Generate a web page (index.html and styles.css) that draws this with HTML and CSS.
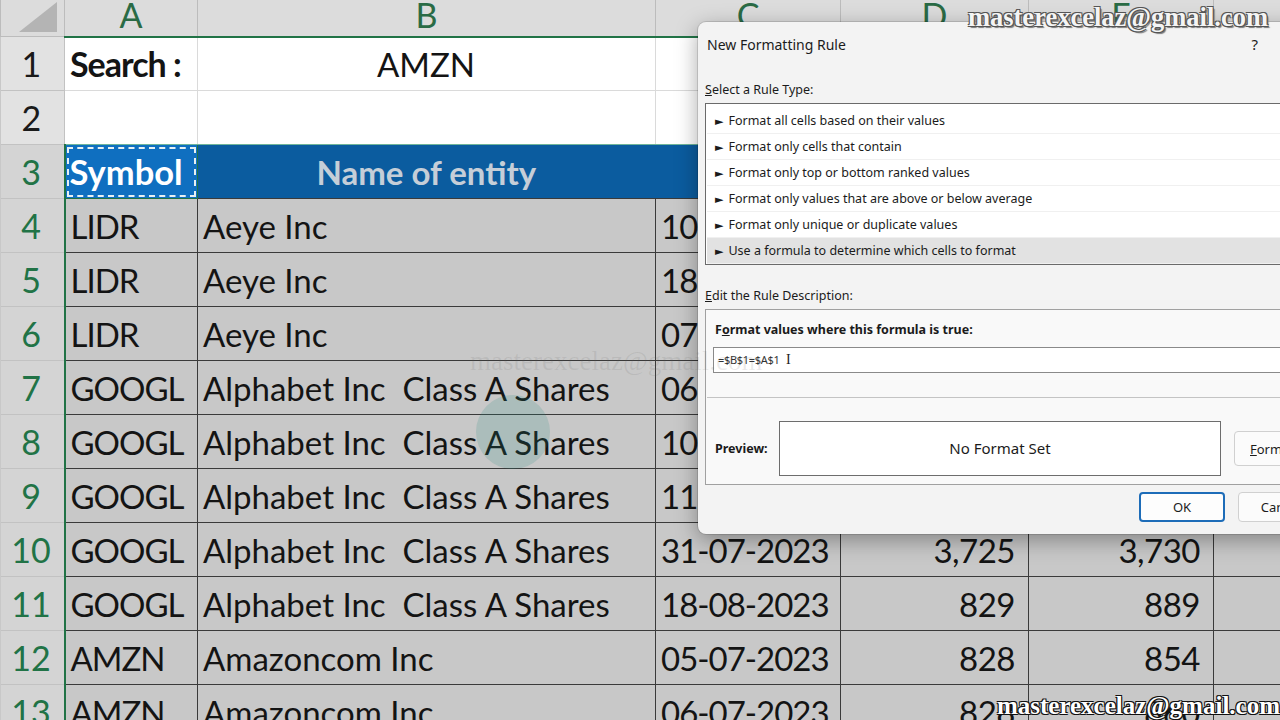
FILE: index.html
```html
<!DOCTYPE html>
<html lang="en">
<head>
    <meta charset="UTF-8">
    <title>New Formatting Rule</title>
    <link rel="stylesheet" href="styles.css">
</head>
<body>
    <div class="sheet">
        <table class="grid">
            <colgroup>
                <col class="col-hd">
                <col class="col-a">
                <col class="col-b">
                <col class="col-c">
                <col class="col-d">
                <col class="col-e">
                <col class="col-f">
            </colgroup>
            <thead>
                <tr>
                    <th class="corner">
                        <svg width="64" height="36" viewBox="0 0 64 36"><polygon points="56,2 56,32 18,32" fill="#b4b4b4"/></svg>
                    </th>
                    <th>A</th>
                    <th>B</th>
                    <th>C</th>
                    <th>D</th>
                    <th>E</th>
                    <th>F</th>
                </tr>
            </thead>
            <tbody>
                <tr class="plain">
                    <th>1</th>
                    <td class="search-label">Search :</td>
                    <td class="search-box">AMZN</td>
                    <td></td><td></td><td></td><td></td>
                </tr>
                <tr class="plain">
                    <th>2</th>
                    <td></td><td></td><td></td><td></td><td></td><td></td>
                </tr>
                <tr class="head-row">
                    <th>3</th>
                    <td class="active">Symbol</td>
                    <td class="center">Name of entity</td>
                    <td class="center">Date</td>
                    <td class="center">Open</td>
                    <td class="center">Close</td>
                    <td></td>
                </tr>
                <tr><th>4</th><td>LIDR</td><td>Aeye Inc</td><td>10-07-2023</td><td class="num">2</td><td class="num">2</td><td></td></tr>
                <tr><th>5</th><td>LIDR</td><td>Aeye Inc</td><td>18-07-2023</td><td class="num">1</td><td class="num">1</td><td></td></tr>
                <tr><th>6</th><td>LIDR</td><td>Aeye Inc</td><td>07-08-2023</td><td class="num">1</td><td class="num">1</td><td></td></tr>
                <tr><th>7</th><td>GOOGL</td><td>Alphabet Inc&nbsp; Class A Shares</td><td>06-07-2023</td><td class="num">3,610</td><td class="num">3,640</td><td></td></tr>
                <tr><th>8</th><td>GOOGL</td><td>Alphabet Inc&nbsp; Class A Shares</td><td>10-07-2023</td><td class="num">3,650</td><td class="num">3,660</td><td></td></tr>
                <tr><th>9</th><td>GOOGL</td><td>Alphabet Inc&nbsp; Class A Shares</td><td>11-07-2023</td><td class="num">3,700</td><td class="num">3,710</td><td></td></tr>
                <tr><th>10</th><td>GOOGL</td><td>Alphabet Inc&nbsp; Class A Shares</td><td>31-07-2023</td><td class="num">3,725</td><td class="num">3,730</td><td></td></tr>
                <tr><th>11</th><td>GOOGL</td><td>Alphabet Inc&nbsp; Class A Shares</td><td>18-08-2023</td><td class="num">829</td><td class="num">889</td><td></td></tr>
                <tr><th>12</th><td>AMZN</td><td>Amazoncom Inc</td><td>05-07-2023</td><td class="num">828</td><td class="num">854</td><td></td></tr>
                <tr><th>13</th><td>AMZN</td><td>Amazoncom Inc</td><td>06-07-2023</td><td class="num">828</td><td class="num">860</td><td></td></tr>
            </tbody>
        </table>

        <div class="cursor-ring"></div>

        <div class="dialog">
            <div class="dlg-title">
                <span>New Formatting Rule</span>
                <span class="help">?</span>
                <span class="close">&#x2715;</span>
            </div>

            <div class="dlg-label"><u>S</u>elect a Rule Type:</div>
            <ul class="rule-list">
                <li>Format all cells based on their values</li>
                <li>Format only cells that contain</li>
                <li>Format only top or bottom ranked values</li>
                <li>Format only values that are above or below average</li>
                <li>Format only unique or duplicate values</li>
                <li class="selected">Use a formula to determine which cells to format</li>
            </ul>

            <div class="dlg-label"><u>E</u>dit the Rule Description:</div>
            <div class="desc-box">
                <div class="desc-title">F<u>o</u>rmat values where this formula is true:</div>
                <div class="formula">=$B$1=$A$1<span class="ibeam">I</span></div>
                <div class="divider"></div>
                <div class="preview-row">
                    <span class="preview-label">Preview:</span>
                    <div class="preview-box">No Format Set</div>
                    <button class="btn btn-format"><u>F</u>ormat...</button>
                </div>
            </div>

            <div class="dlg-buttons">
                <button class="btn btn-ok">OK</button>
                <button class="btn">Cancel</button>
            </div>
        </div>

        <div class="watermark wm-top">masterexcelaz@gmail.com</div>
        <div class="watermark wm-mid">masterexcelaz@gmail.com</div>
        <div class="watermark wm-bottom">masterexcelaz@gmail.com</div>
    </div>
</body>
</html>
```

FILE: styles.css
```css
* {
    box-sizing: border-box;
}

body {
    margin: 0;
    background-color: #c8c8c8;
    font-family: Lato, "Liberation Sans", sans-serif;
    overflow: hidden;
}

.sheet {
    position: relative;
    width: 1280px;
    height: 720px;
    overflow: hidden;
}

/* spreadsheet grid */
.grid {
    border-collapse: collapse;
    table-layout: fixed;
    width: 1413px;
}

.col-hd { width: 64px; }
.col-a { width: 133px; }
.col-b { width: 458px; }
.col-c { width: 185px; }
.col-d { width: 188px; }
.col-e { width: 185px; }
.col-f { width: 200px; }

.grid th,
.grid td {
    height: 54px;
    padding: 0 6px 0 5px;
    font-size: 33px;
    font-weight: normal;
    white-space: nowrap;
    overflow: hidden;
    color: #141414;
}

.grid td {
    background-color: #c8c8c8;
    border: 1px solid #3a3a3a;
}

/* symbols and dates are set a little tighter, like the narrow sheet font */
.grid tbody td:nth-child(2) {
    letter-spacing: -1px;
}

.grid tbody td:nth-child(4) {
    letter-spacing: -1px;
}

.grid thead th {
    height: 36px;
    padding: 0;
    background-color: #dcdcdc;
    color: #2a6b45;
    font-size: 34px;
    text-align: center;
    vertical-align: top;
    line-height: 30px;
    border-left: 1px solid #bcbcbc;
    border-right: 1px solid #bcbcbc;
    border-bottom: 2px solid #217346;
}

.grid thead th.corner {
    border-bottom: 1px solid #bcbcbc;
    line-height: 0;
}

.grid tbody th {
    padding: 0 2px 0 0;
    text-align: center;
    background-color: #d4d4d4;
    color: #217346;
    font-size: 34px;
    border-top: 1px solid #c2c2c2;
    border-bottom: 1px solid #c2c2c2;
    border-right: 2px solid #217346;
}

.grid tr.plain th {
    background-color: #e2e2e2;
    color: #1a1a1a;
    border-right: 1px solid #c2c2c2;
}

.grid tr.plain td {
    background-color: #ffffff;
    border: 1px solid #dadada;
}

.grid tr.plain + tr.plain td {
    border-bottom: 1px solid #6fb59a;
}

.grid td.search-label {
    font-weight: bold;
    font-size: 34px;
    letter-spacing: 0;
    border-right: 1px solid #111;
    border-bottom: 1px solid #6a6a6a;
}

.grid td.search-box {
    text-align: center;
    border-right: 1px solid #111;
    border-bottom: 1px solid #6a6a6a;
}

.grid tr.head-row td {
    background-color: #0b5c9f;
    color: #c5ced8;
    font-weight: bold;
    letter-spacing: 0;
    border-top: 1px solid #8fd3c4;
    border-bottom: 1px solid #3a3a3a;
    border-left: none;
    border-right: none;
}

.grid tr.head-row td.active {
    background-color: #0f6fc0;
    color: #ffffff;
    font-size: 34.5px;
    padding-left: 4px;
    border: 1px solid #217346;
    outline: 2px dashed #e6f0f4;
    outline-offset: -4px;
}

.center {
    text-align: center;
}

.grid td.num {
    text-align: right;
    padding-right: 13px;
    letter-spacing: -0.5px;
}

.cursor-ring {
    position: absolute;
    left: 476px;
    top: 395px;
    width: 74px;
    height: 74px;
    border-radius: 50%;
    background-color: rgba(40, 140, 125, 0.18);
}

/* New Formatting Rule dialog */
.dialog {
    position: absolute;
    left: 698px;
    top: 22px;
    width: 640px;
    height: 512px;
    padding: 0 14px 0 7px;
    background-color: #f3f3f3;
    border-radius: 8px;
    box-shadow: 0 6px 22px rgba(0, 0, 0, 0.35), 0 0 0 1px rgba(0, 0, 0, 0.12);
    font-family: "Noto Sans", "Open Sans", sans-serif;
    font-size: 12.5px;
    color: #1b1b1b;
}

.dlg-title {
    display: flex;
    align-items: center;
    height: 44px;
    padding-left: 2px;
    font-size: 14px;
}

.dlg-title .help {
    margin-left: auto;
    margin-right: 38px;
    font-size: 15px;
}

.dlg-title .close {
    margin-right: 16px;
    font-size: 14px;
}

.dlg-label {
    height: 20px;
    margin-top: 14px;
    line-height: 20px;
}

.rule-list {
    list-style: none;
    margin: 3px 0 0;
    padding: 4px 0 0;
    height: 162px;
    border: 1px solid #6a6a6a;
    background-color: #ffffff;
}

.rule-list li {
    height: 26px;
    line-height: 25px;
    padding-left: 8px;
    margin-left: 1px;
    border-bottom: 1px solid #f0f0f0;
}

.rule-list li::before {
    content: "\25BA";
    font-family: "DejaVu Sans", sans-serif;
    font-size: 11px;
    margin-right: 5px;
    vertical-align: 0;
}

.rule-list li.selected {
    background-color: #e2e2e2;
}

.rule-list + .dlg-label {
    margin-top: 21px;
}

.desc-box {
    margin-top: 3px;
    height: 176px;
    border: 1px solid #a0a0a0;
    background-color: #f9f9f9;
}

.desc-title {
    margin: 10px 0 0 9px;
    line-height: 20px;
    font-weight: bold;
}

.formula {
    position: relative;
    margin: 7px 0 0 7px;
    height: 26px;
    padding-left: 4px;
    line-height: 24px;
    font-size: 11px;
    letter-spacing: -0.3px;
    color: #333;
    background-color: #ffffff;
    border: 1px solid #8a8a8a;
}

.ibeam {
    position: absolute;
    left: 72px;
    top: 3px;
    font-family: "Liberation Serif", serif;
    font-size: 14px;
    line-height: 18px;
    color: #222;
}

.divider {
    margin: 24px 0 0 1px;
    border-top: 1px solid #c4c4c4;
}

.preview-row {
    display: flex;
    align-items: center;
    margin-top: 23px;
}

.preview-label {
    flex-shrink: 0;
    width: 73px;
    padding-left: 9px;
    font-weight: bold;
}

.preview-box {
    flex-shrink: 0;
    width: 442px;
    height: 55px;
    line-height: 53px;
    text-align: center;
    font-size: 15px;
    background-color: #ffffff;
    border: 1px solid #6d6d6d;
}

.btn {
    font-family: "Noto Sans", "Open Sans", sans-serif;
    font-size: 13px;
    color: #1b1b1b;
    background-color: #fbfbfb;
    border: 1px solid #d0d0d0;
    border-radius: 4px;
    width: 86px;
    height: 30px;
}

.btn-format {
    flex-shrink: 0;
    margin-left: 13px;
    width: 96px;
    height: 35px;
    text-align: left;
    padding-left: 15px;
}

.dlg-buttons {
    display: flex;
    justify-content: flex-end;
    gap: 13px;
    margin-top: 7px;
}

.btn-ok {
    border: 2px solid #1d6cb8;
    background-color: #fdfdfd;
}

/* watermarks */
.watermark {
    position: absolute;
    font-family: "Liberation Serif", serif;
    font-weight: bold;
    white-space: nowrap;
}

.wm-top {
    right: 12px;
    top: 2px;
    font-size: 26.5px;
    color: #f4f4f4;
    text-shadow: -1px -1px 0 #555, 1px -1px 0 #555, -1px 1px 0 #555, 1px 1px 0 #555, 2px 2px 1px #777;
}

.wm-mid {
    left: 470px;
    top: 346px;
    font-size: 27px;
    font-weight: normal;
    color: rgba(90, 90, 90, 0.12);
}

.wm-bottom {
    right: 0;
    bottom: 0;
    font-size: 25px;
    color: #ffffff;
    text-shadow: -1px -1px 0 #111, 1px -1px 0 #111, -1px 1px 0 #111, 1px 1px 0 #111;
}
```
